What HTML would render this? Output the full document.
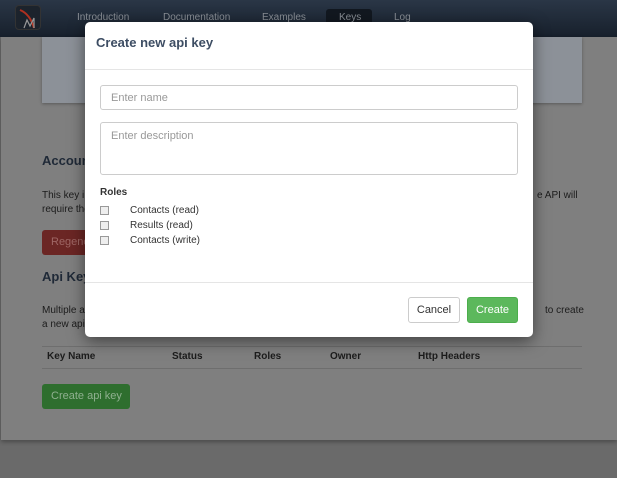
<!DOCTYPE html>
<html><head><style>
*{box-sizing:border-box;margin:0;padding:0}
body{width:617px;height:478px;overflow:hidden;position:relative;font-family:"Liberation Sans",sans-serif;background:#6a6a6a}
.nav{position:absolute;left:0;top:0;width:617px;height:37px;background:linear-gradient(#2a3646,#17202c)}
.nav span{position:absolute;top:12px;font-size:10px;color:#8a8f96}
.logo{position:absolute;left:15px;top:5px;width:26px;height:25px;border-radius:4px;background:#1c232c;border:1px solid #333}
.page{position:absolute;left:1px;top:37px;width:616px;height:403px;background:#7f7f7f;box-shadow:0 2px 4px rgba(0,0,0,.3)}
.panel{position:absolute;left:42px;top:37px;width:540px;height:66px;background:#8c9198;box-shadow:0 1px 3px rgba(0,0,0,.3)}
.t{position:absolute;color:#1c1c1c;font-size:10px;white-space:nowrap}
h4{position:absolute;font-size:13px;color:#1f2937;font-weight:bold}
.btn{position:absolute;border-radius:3px;font-size:11px;white-space:nowrap}
.modal{position:absolute;left:85px;top:22px;width:448px;height:315px;background:#fff;border-radius:5px;box-shadow:0 4px 16px rgba(0,0,0,.5)}
.inp{position:absolute;left:15px;width:418px;border:1px solid #ccc;border-radius:3px;font-size:11px;color:#999;padding:7px 10px}
.cb{position:absolute;left:15px;width:9px;height:9px;border:1px solid #999;background:#eee}
.lb{position:absolute;left:45px;font-size:10px;color:#333}
</style></head><body>
<div class="nav">
<div class="logo"><svg width="26" height="25"><path d="M4 4 Q14 8 18 22" stroke="#b03020" stroke-width="2" fill="none"/><path d="M8 22 L11 14 L14 20 L18 12 L18 22" stroke="#999" stroke-width="1.2" fill="none"/></svg></div>
<span style="left:77px">Introduction</span>
<span style="left:163px">Documentation</span>
<span style="left:262px">Examples</span>
<div style="position:absolute;left:326px;top:9px;width:46px;height:28px;background:#121820;border-radius:3px"></div>
<span style="left:339px">Keys</span>
<span style="left:394px">Log</span>
</div>
<div class="page"></div>
<div class="panel"></div>
<h4 style="left:42px;top:153px">Account</h4>
<div class="t" style="left:42px;top:190px">This key i</div>
<div class="t" style="left:537px;top:190px">e API will</div>
<div class="t" style="left:42px;top:204px">require the</div>
<div class="btn" style="left:42px;top:230px;width:50px;height:25px;background:#6b2624;color:#9e6664;padding:6px 9px">Regene</div>
<h4 style="left:42px;top:269px">Api Key</h4>
<div class="t" style="left:42px;top:305px">Multiple a</div>
<div class="t" style="left:545px;top:305px">to create</div>
<div class="t" style="left:42px;top:319px">a new api</div>
<div style="position:absolute;left:42px;top:346px;width:540px;height:1px;background:#6e6e6e"></div>
<div style="position:absolute;left:42px;top:368px;width:540px;height:1px;background:#6e6e6e"></div>
<div class="t" style="left:47px;top:351px;font-weight:bold">Key Name</div>
<div class="t" style="left:172px;top:351px;font-weight:bold">Status</div>
<div class="t" style="left:254px;top:351px;font-weight:bold">Roles</div>
<div class="t" style="left:330px;top:351px;font-weight:bold">Owner</div>
<div class="t" style="left:418px;top:351px;font-weight:bold">Http Headers</div>
<div class="btn" style="left:42px;top:384px;width:88px;height:25px;background:#2e6e2e;color:#8fb08f;padding:6px 9px">Create api key</div>

<div class="modal">
<div style="position:absolute;left:11px;top:13px;font-size:13px;font-weight:bold;color:#3d4d63">Create new api key</div>
<div style="position:absolute;left:0;top:47px;width:448px;height:1px;background:#e5e5e5"></div>
<div class="inp" style="top:63px;height:25px;padding-top:6px">Enter name</div>
<div class="inp" style="top:100px;height:53px">Enter description</div>
<div style="position:absolute;left:15px;top:165px;font-size:10px;font-weight:bold;color:#333">Roles</div>
<div class="cb" style="top:184px"></div><div class="lb" style="top:183px">Contacts (read)</div>
<div class="cb" style="top:199px"></div><div class="lb" style="top:198px">Results (read)</div>
<div class="cb" style="top:214px"></div><div class="lb" style="top:213px">Contacts (write)</div>
<div style="position:absolute;left:0;top:260px;width:448px;height:1px;background:#e5e5e5"></div>
<div class="btn" style="left:323px;top:275px;width:52px;height:26px;border:1px solid #ccc;color:#333;text-align:center;line-height:24px">Cancel</div>
<div class="btn" style="left:382px;top:275px;width:51px;height:26px;background:#5cb85c;border:1px solid #4cae4c;color:#fff;text-align:center;line-height:24px">Create</div>
</div>
</body></html>
